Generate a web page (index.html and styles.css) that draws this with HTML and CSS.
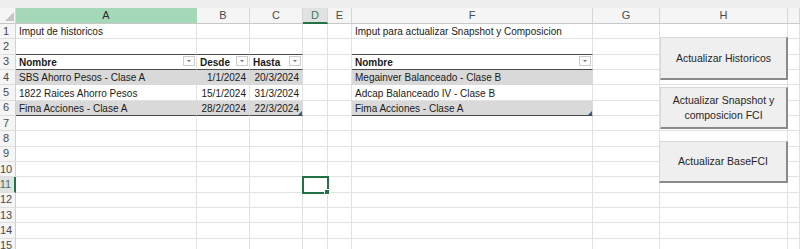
FILE: index.html
```html
<!DOCTYPE html>
<html lang="es">
<head>
<meta charset="utf-8">
<title>Hoja</title>
<link rel="stylesheet" href="styles.css">
</head>
<body>
<div class="app">
  <div class="topbar"></div>
  <div class="sheet">
    <div class="ch corner"><svg width="9" height="9" viewBox="0 0 9 9"><path d="M9 0 L9 9 L0 9 Z" fill="#c4c4c4"/></svg></div>
    <div class="ch selcol">A</div>
    <div class="ch">B</div>
    <div class="ch">C</div>
    <div class="ch active">D</div>
    <div class="ch">E</div>
    <div class="ch">F</div>
    <div class="ch">G</div>
    <div class="ch">H</div>
    <div class="ch"></div>

    <div class="rh">1</div><div class="c">Imput de historicos</div><div class="c"></div><div class="c"></div><div class="c"></div><div class="c"></div><div class="c">Imput para actualizar Snapshot y Composicion</div><div class="c"></div><div class="c"></div><div class="c"></div>

    <div class="rh">2</div><div class="c above"></div><div class="c above"></div><div class="c above"></div><div class="c"></div><div class="c"></div><div class="c above"></div><div class="c"></div><div class="c"></div><div class="c"></div>

    <div class="rh">3</div>
    <div class="c th"><span>Nombre</span><span class="flt"></span></div>
    <div class="c th"><span>Desde</span><span class="flt"></span></div>
    <div class="c th"><span>Hasta</span><span class="flt"></span></div>
    <div class="c"></div><div class="c"></div>
    <div class="c th"><span>Nombre</span><span class="flt"></span></div>
    <div class="c"></div><div class="c"></div><div class="c"></div>

    <div class="rh">4</div><div class="c band">SBS Ahorro Pesos - Clase A</div><div class="c band num">1/1/2024</div><div class="c band num">20/3/2024</div><div class="c"></div><div class="c"></div><div class="c band">Megainver Balanceado - Clase B</div><div class="c"></div><div class="c"></div><div class="c"></div>

    <div class="rh">5</div><div class="c">1822 Raices Ahorro Pesos</div><div class="c num">15/1/2024</div><div class="c num">31/3/2024</div><div class="c"></div><div class="c"></div><div class="c">Adcap Balanceado IV - Clase B</div><div class="c"></div><div class="c"></div><div class="c"></div>

    <div class="rh">6</div><div class="c band tend">Fima Acciones - Clase A</div><div class="c band num tend">28/2/2024</div><div class="c band num tend grip">22/3/2024</div><div class="c"></div><div class="c"></div><div class="c band tend grip">Fima Acciones - Clase A</div><div class="c"></div><div class="c"></div><div class="c"></div>

    <div class="rh">7</div><div class="c"></div><div class="c"></div><div class="c"></div><div class="c"></div><div class="c"></div><div class="c"></div><div class="c"></div><div class="c"></div><div class="c"></div>
    <div class="rh">8</div><div class="c"></div><div class="c"></div><div class="c"></div><div class="c"></div><div class="c"></div><div class="c"></div><div class="c"></div><div class="c"></div><div class="c"></div>
    <div class="rh">9</div><div class="c"></div><div class="c"></div><div class="c"></div><div class="c"></div><div class="c"></div><div class="c"></div><div class="c"></div><div class="c"></div><div class="c"></div>
    <div class="rh">10</div><div class="c"></div><div class="c"></div><div class="c"></div><div class="c"></div><div class="c"></div><div class="c"></div><div class="c"></div><div class="c"></div><div class="c"></div>
    <div class="rh active">11</div><div class="c"></div><div class="c"></div><div class="c"></div><div class="c selected"></div><div class="c"></div><div class="c"></div><div class="c"></div><div class="c"></div><div class="c"></div>
    <div class="rh">12</div><div class="c"></div><div class="c"></div><div class="c"></div><div class="c"></div><div class="c"></div><div class="c"></div><div class="c"></div><div class="c"></div><div class="c"></div>
    <div class="rh">13</div><div class="c"></div><div class="c"></div><div class="c"></div><div class="c"></div><div class="c"></div><div class="c"></div><div class="c"></div><div class="c"></div><div class="c"></div>
    <div class="rh">14</div><div class="c"></div><div class="c"></div><div class="c"></div><div class="c"></div><div class="c"></div><div class="c"></div><div class="c"></div><div class="c"></div><div class="c"></div>
    <div class="rh">15</div><div class="c"></div><div class="c"></div><div class="c"></div><div class="c"></div><div class="c"></div><div class="c"></div><div class="c"></div><div class="c"></div><div class="c"></div>
  </div>

  <div class="btn b1">Actualizar Historicos</div>
  <div class="btn b2">Actualizar Snapshot y<br>composicion FCI</div>
  <div class="btn b3">Actualizar BaseFCI</div>
</div>
</body>
</html>
```

FILE: styles.css
```css
* { box-sizing: border-box; }

html, body {
  margin: 0;
  padding: 0;
  background: #ffffff;
  overflow: hidden;
}

.app {
  position: relative;
  width: 800px;
  height: 249px;
  overflow: hidden;
  font-family: "Liberation Sans", Arial, sans-serif;
  color: #1a1a1a;
}

.topbar {
  height: 8px;
  background: #eeeeee;
}

.sheet {
  display: grid;
  grid-template-columns: 16px 181px 53px 53px 25px 24px 241px 67px 128px 12px;
  grid-template-rows: 16px repeat(15, 15.333px);
}

/* column headers */
.ch {
  display: flex;
  align-items: center;
  justify-content: center;
  background: #f5f5f5;
  border-right: 1px solid #d6d6d6;
  border-bottom: 1px solid #c8c8c8;
  font-size: 11px;
  color: #4a4a4a;
  line-height: 1;
}

.ch.corner {
  align-items: flex-end;
  justify-content: flex-end;
  padding: 0 1px 2px 0;
}

.ch.selcol {
  background: #a4d8b9;
  color: #2a2a2a;
  border-right-color: #a4d8b9;
}

.ch.active {
  background: #e2e2e2;
  color: #3d7a56;
  border-bottom: 2px solid #217346;
}

/* row headers */
.rh {
  display: flex;
  align-items: center;
  justify-content: center;
  padding-right: 3px;
  background: #f5f5f5;
  border-right: 1px solid #d0d0d0;
  border-bottom: 1px solid #dedede;
  font-size: 11px;
  color: #4a4a4a;
  line-height: 1;
}

.rh.active {
  background: #e2e2e2;
  color: #3d7a56;
  border-right: 2px solid #217346;
}

/* cells */
.c {
  position: relative;
  display: flex;
  align-items: flex-end;
  padding: 0 3px 1px 3px;
  border-right: 1px solid #e2e2e2;
  border-bottom: 1px solid #e2e2e2;
  font-size: 10px;
  line-height: 11px;
  white-space: nowrap;
  color: #1a1a1a;
}

.c.num { justify-content: flex-end; }

.c.above { border-bottom: 1px solid #4a4a4a; }

.c.th {
  font-weight: bold;
  border-bottom: 1px solid #4a4a4a;
  justify-content: space-between;
}

.flt {
  position: relative;
  align-self: center;
  width: 12px;
  height: 10px;
  margin-right: -2px;
  border: 1px solid #cccccc;
  background: #fbfbfb;
}

.flt::after {
  content: "";
  position: absolute;
  left: 3px;
  top: 3px;
  border-left: 2px solid transparent;
  border-right: 2px solid transparent;
  border-top: 2px solid #6f6f6f;
}

.c.band {
  background: #d9d9d9;
  border-right-color: #d9d9d9;
  border-bottom-color: #d9d9d9;
}

.c.tend { border-bottom: 1px solid #4a4a4a; }

.c.grip::after {
  content: "";
  position: absolute;
  right: 0;
  bottom: 0;
  border-left: 4px solid transparent;
  border-bottom: 4px solid #3a5a8c;
}

.c.selected {
  outline: 2px solid #217346;
  outline-offset: -1px;
  z-index: 2;
}

.c.selected::after {
  content: "";
  position: absolute;
  right: -3px;
  bottom: -3px;
  width: 4px;
  height: 4px;
  background: #217346;
  border: 1px solid #ffffff;
}

/* buttons (form controls floating over the sheet) */
.btn {
  position: absolute;
  display: flex;
  align-items: center;
  justify-content: center;
  text-align: center;
  background: #efefef;
  border-top: 1px solid #d6d6d6;
  border-left: 1px solid #d6d6d6;
  border-right: 2px solid #8a8a8a;
  border-bottom: 2px solid #8a8a8a;
  font-size: 10.5px;
  line-height: 14.5px;
  color: #262626;
}

.b1 { left: 660px; top: 37px; width: 128px; height: 43px; }
.b2 { left: 660px; top: 87px; width: 128px; height: 42px; }
.b3 { left: 659px; top: 141px; width: 129px; height: 42px; }
```
